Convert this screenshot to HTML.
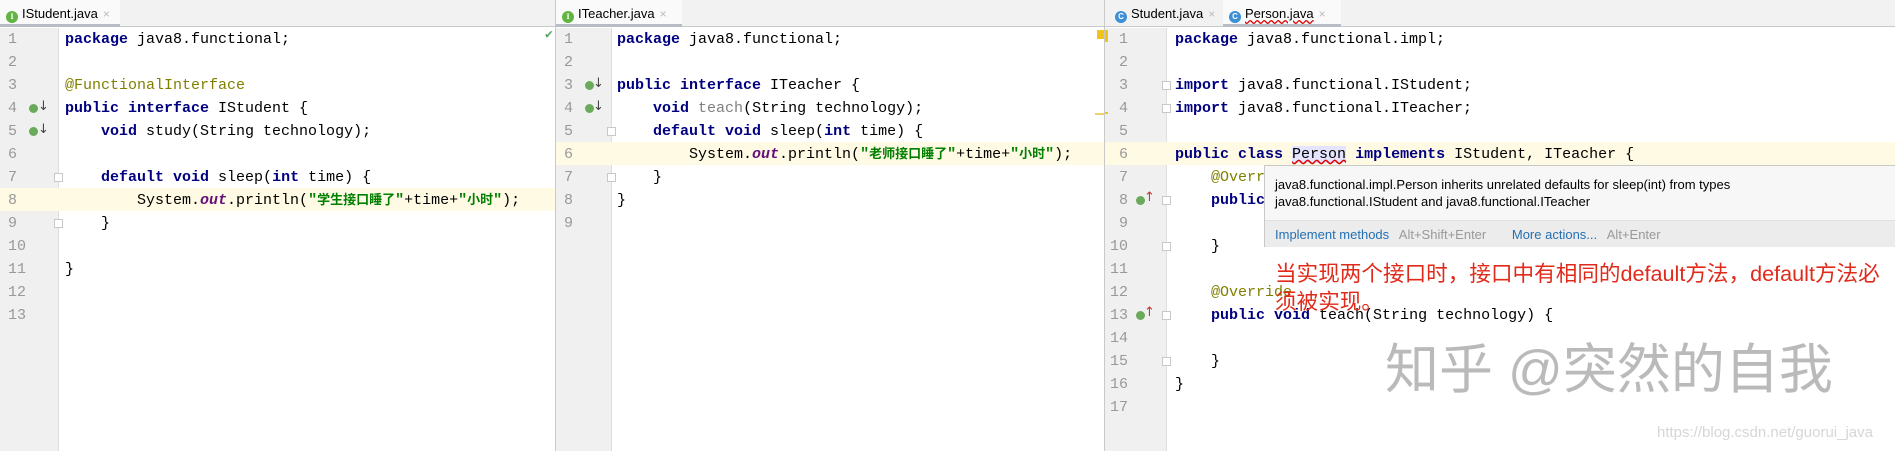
<!DOCTYPE html>
<html><head><meta charset="utf-8"><style>
*{margin:0;padding:0;box-sizing:border-box}
body{width:1895px;height:451px;overflow:hidden;background:#fff;position:relative;font-family:"Liberation Mono","Noto Sans CJK SC",monospace}
.panel{position:absolute;top:0;height:451px;background:#fff;overflow:hidden}
.tabs{position:absolute;left:0;top:0;right:0;height:27px;background:#f2f2f2;border-bottom:1px solid #c9c9c9}
.tab{position:absolute;top:0;height:27px;font:13px "Liberation Sans",sans-serif;color:#000;line-height:27px;padding-left:6px;border-bottom:3px solid #b8bcc4;background:#fafafa}
.tab.plain{border-bottom:none;background:transparent}
.ic{display:inline-block;width:12px;height:12px;border-radius:6px;background:#62b543;color:#fff;font:bold 8px "Liberation Serif",serif;text-align:center;line-height:12px;vertical-align:-1px;margin-right:4px}
.ic.c{background:#3d8fd6;font-family:"Liberation Sans",sans-serif}
.x{color:#bbb;margin-left:5px;font-size:12px}
.gut{position:absolute;top:28px;bottom:0;left:0;background:#f0f0f0;border-right:1px solid #dedede}
.ln{position:absolute;height:23px;line-height:23px;font-size:15px;color:#999;left:0;width:100%}
.ln span.n{position:absolute;left:8px}
.hl{position:absolute;height:23px;background:#fffae3}
.code{position:absolute;height:23px;line-height:23px;font-size:15px;white-space:pre;color:#000}
.k{color:#000080;font-weight:bold}
.a{color:#808000}
.s{color:#008000;font-weight:bold}
.o{color:#660e7a;font-weight:bold;font-style:italic}
.g{color:#808080}
.cj{font-size:13px}
.gi{position:absolute;width:9px;height:9px;border-radius:5px;background:#6aaa5a}
.ar{position:absolute;font-size:13px;color:#444;font-family:"DejaVu Sans",sans-serif}
.fold{position:absolute;width:9px;height:9px;border:1px solid #c8c8c8;background:#fff}
</style></head><body>

<!-- Panel 1 -->
<div class="panel" style="left:0;width:556px;border-right:1px solid #c9c9c9">
 <div class="tabs"><div class="tab" style="left:0;width:120px"><span class="ic">I</span>IStudent.java<span class="x">×</span></div></div>
 <div class="gut" style="width:59px"></div>
 <div class="hl" style="left:0;top:188px;width:556px"></div>
 <div class="ln" style="top:28px"><span class="n">1</span></div>
 <div class="ln" style="top:51px"><span class="n">2</span></div>
 <div class="ln" style="top:74px"><span class="n">3</span></div>
 <div class="ln" style="top:97px"><span class="n">4</span></div>
 <div class="ln" style="top:120px"><span class="n">5</span></div>
 <div class="ln" style="top:143px"><span class="n">6</span></div>
 <div class="ln" style="top:166px"><span class="n">7</span></div>
 <div class="ln" style="top:189px"><span class="n">8</span></div>
 <div class="ln" style="top:212px"><span class="n">9</span></div>
 <div class="ln" style="top:235px"><span class="n">10</span></div>
 <div class="ln" style="top:258px"><span class="n">11</span></div>
 <div class="ln" style="top:281px"><span class="n">12</span></div>
 <div class="ln" style="top:304px"><span class="n">13</span></div>
 <div class="gi" style="left:29px;top:104px"></div><div class="ar" style="left:38px;top:99px">↓</div>
 <div class="gi" style="left:29px;top:127px"></div><div class="ar" style="left:38px;top:122px">↓</div>
 <div class="fold" style="left:54px;top:173px"></div>
 <div class="fold" style="left:54px;top:219px"></div>
 <div style="position:absolute;left:545px;top:27px;color:#59a869;font-size:13px">✔</div>
 <div class="code" style="left:65px;top:28px"><span class="k">package</span> java8.functional;</div>
 <div class="code" style="left:65px;top:74px"><span class="a">@FunctionalInterface</span></div>
 <div class="code" style="left:65px;top:97px"><span class="k">public interface</span> IStudent {</div>
 <div class="code" style="left:65px;top:120px">    <span class="k">void</span> study(String technology);</div>
 <div class="code" style="left:65px;top:166px">    <span class="k">default void</span> sleep(<span class="k">int</span> time) {</div>
 <div class="code" style="left:65px;top:189px">        System.<span class="o">out</span>.println(<span class="s">"<span class="cj">学生接口睡了</span>"</span>+time+<span class="s">"<span class="cj">小时</span>"</span>);</div>
 <div class="code" style="left:65px;top:212px">    }</div>
 <div class="code" style="left:65px;top:258px">}</div>
</div>

<!-- Panel 2 -->
<div class="panel" style="left:556px;width:549px;border-right:1px solid #c9c9c9">
 <div class="tabs"><div class="tab" style="left:0;width:126px"><span class="ic">I</span>ITeacher.java<span class="x">×</span></div></div>
 <div class="gut" style="width:56px"></div>
 <div class="hl" style="left:0;top:142px;width:549px"></div>
 <div class="ln" style="top:28px"><span class="n">1</span></div>
 <div class="ln" style="top:51px"><span class="n">2</span></div>
 <div class="ln" style="top:74px"><span class="n">3</span></div>
 <div class="ln" style="top:97px"><span class="n">4</span></div>
 <div class="ln" style="top:120px"><span class="n">5</span></div>
 <div class="ln" style="top:143px"><span class="n">6</span></div>
 <div class="ln" style="top:166px"><span class="n">7</span></div>
 <div class="ln" style="top:189px"><span class="n">8</span></div>
 <div class="ln" style="top:212px"><span class="n">9</span></div>
 <div class="gi" style="left:29px;top:81px"></div><div class="ar" style="left:37px;top:76px">↓</div>
 <div class="gi" style="left:29px;top:104px"></div><div class="ar" style="left:37px;top:99px">↓</div>
 <div class="fold" style="left:51px;top:127px"></div>
 <div class="fold" style="left:51px;top:173px"></div>
 <div style="position:absolute;left:541px;top:30px;width:9px;height:9px;background:#f0c419"></div>
 <div style="position:absolute;left:539px;top:113px;width:12px;height:2px;background:#f0d070"></div>
 <div class="code" style="left:61px;top:28px"><span class="k">package</span> java8.functional;</div>
 <div class="code" style="left:61px;top:74px"><span class="k">public interface</span> ITeacher {</div>
 <div class="code" style="left:61px;top:97px">    <span class="k">void</span> <span class="g">teach</span>(String technology);</div>
 <div class="code" style="left:61px;top:120px">    <span class="k">default void</span> sleep(<span class="k">int</span> time) {</div>
 <div class="code" style="left:61px;top:143px">        System.<span class="o">out</span>.println(<span class="s">"<span class="cj">老师接口睡了</span>"</span>+time+<span class="s">"<span class="cj">小时</span>"</span>);</div>
 <div class="code" style="left:61px;top:166px">    }</div>
 <div class="code" style="left:61px;top:189px">}</div>
</div>

<!-- Panel 3 -->
<div class="panel" style="left:1105px;width:790px">
 <div class="tabs">
  <div class="tab plain" style="left:4px;width:108px"><span class="ic c">C</span>Student.java<span class="x">×</span></div>
  <div class="tab" style="left:118px;width:118px"><span class="ic c">C</span><span style="text-decoration:underline wavy #d00">Person.java</span><span class="x">×</span></div>
 </div>
 <div class="gut" style="width:62px"></div>
 <div style="position:absolute;left:0;top:30px;width:3px;height:12px;background:#f0c419"></div>
 <div style="position:absolute;left:0;top:112px;width:3px;height:2px;background:#f0c419"></div>
 <div class="hl" style="left:0;top:142px;width:790px"></div>
 <div class="ln" style="top:28px"><span class="n" style="left:14px">1</span></div>
 <div class="ln" style="top:51px"><span class="n" style="left:14px">2</span></div>
 <div class="ln" style="top:74px"><span class="n" style="left:14px">3</span></div>
 <div class="ln" style="top:97px"><span class="n" style="left:14px">4</span></div>
 <div class="ln" style="top:120px"><span class="n" style="left:14px">5</span></div>
 <div class="ln" style="top:143px"><span class="n" style="left:14px">6</span></div>
 <div class="ln" style="top:166px"><span class="n" style="left:14px">7</span></div>
 <div class="ln" style="top:189px"><span class="n" style="left:14px">8</span></div>
 <div class="ln" style="top:212px"><span class="n" style="left:14px">9</span></div>
 <div class="ln" style="top:235px"><span class="n" style="left:5px">10</span></div>
 <div class="ln" style="top:258px"><span class="n" style="left:5px">11</span></div>
 <div class="ln" style="top:281px"><span class="n" style="left:5px">12</span></div>
 <div class="ln" style="top:304px"><span class="n" style="left:5px">13</span></div>
 <div class="ln" style="top:327px"><span class="n" style="left:5px">14</span></div>
 <div class="ln" style="top:350px"><span class="n" style="left:5px">15</span></div>
 <div class="ln" style="top:373px"><span class="n" style="left:5px">16</span></div>
 <div class="ln" style="top:396px"><span class="n" style="left:5px">17</span></div>
 <div class="gi" style="left:31px;top:196px"></div><div class="ar" style="left:39px;top:190px;color:#c33">↑</div>
 <div class="gi" style="left:31px;top:311px"></div><div class="ar" style="left:39px;top:305px;color:#c33">↑</div>
 <div class="fold" style="left:57px;top:81px"></div>
 <div class="fold" style="left:57px;top:104px"></div>
 <div class="fold" style="left:57px;top:196px"></div>
 <div class="fold" style="left:57px;top:242px"></div>
 <div class="fold" style="left:57px;top:311px"></div>
 <div class="fold" style="left:57px;top:357px"></div>
 <div class="code" style="left:70px;top:28px"><span class="k">package</span> java8.functional.impl;</div>
 <div class="code" style="left:70px;top:74px"><span class="k">import</span> java8.functional.IStudent;</div>
 <div class="code" style="left:70px;top:97px"><span class="k">import</span> java8.functional.ITeacher;</div>
 <div class="code" style="left:70px;top:143px"><span class="k">public class</span> <span style="background:#e4e4ff;text-decoration:underline wavy #d00">Person</span> <span class="k">implements</span> IStudent, ITeacher {</div>
 <div class="code" style="left:70px;top:166px">    <span class="a">@Override</span></div>
 <div class="code" style="left:70px;top:189px">    <span class="k">public</span> <span class="k">void</span> sleep(<span class="k">int</span> time) {</div>
 <div class="code" style="left:70px;top:235px">    }</div>
 <div class="code" style="left:70px;top:281px">    <span class="a">@Override</span></div>
 <div class="code" style="left:70px;top:304px">    <span class="k">public void</span> teach(String technology) {</div>
 <div class="code" style="left:70px;top:350px">    }</div>
 <div class="code" style="left:70px;top:373px">}</div>

 <div style="position:absolute;left:159px;top:165px;width:640px;height:82px;background:#f7f7f7;border:1px solid #c8c8c8;font-family:'Liberation Sans',sans-serif;font-size:13px;color:#000">
  <div style="position:absolute;left:10px;top:10px;line-height:17px">java8.functional.impl.Person inherits unrelated defaults for sleep(int) from types<br>java8.functional.IStudent and java8.functional.ITeacher</div>
  <div style="position:absolute;left:0;right:0;top:54px;height:27px;background:#ececec;border-top:1px solid #e0e0e0;line-height:27px;padding-left:10px">
   <span style="color:#2470b3">Implement methods</span> <span style="color:#999;margin-left:6px">Alt+Shift+Enter</span>
   <span style="color:#2470b3;margin-left:22px">More actions...</span> <span style="color:#999;margin-left:6px">Alt+Enter</span>
  </div>
 </div>

 <div style="position:absolute;left:170px;top:260px;width:640px;font-family:'Liberation Sans','Noto Sans CJK SC',sans-serif;font-size:21.6px;line-height:28px;color:#e02a1a;white-space:nowrap">当实现两个接口时，接口中有相同的default方法，default方法必<br>须被实现。</div>

 <div style="position:absolute;left:280px;top:338px;font-family:'Liberation Sans','Noto Sans CJK SC',sans-serif;font-size:54px;line-height:64px;color:rgba(140,140,140,0.6);white-space:nowrap">知乎 @突然的自我</div>
 <div style="position:absolute;left:552px;top:424px;font-family:'Liberation Sans',sans-serif;font-size:15px;color:#d6d6d6;white-space:nowrap">https://blog.csdn.net/guorui_java</div>
</div>
</body></html>
